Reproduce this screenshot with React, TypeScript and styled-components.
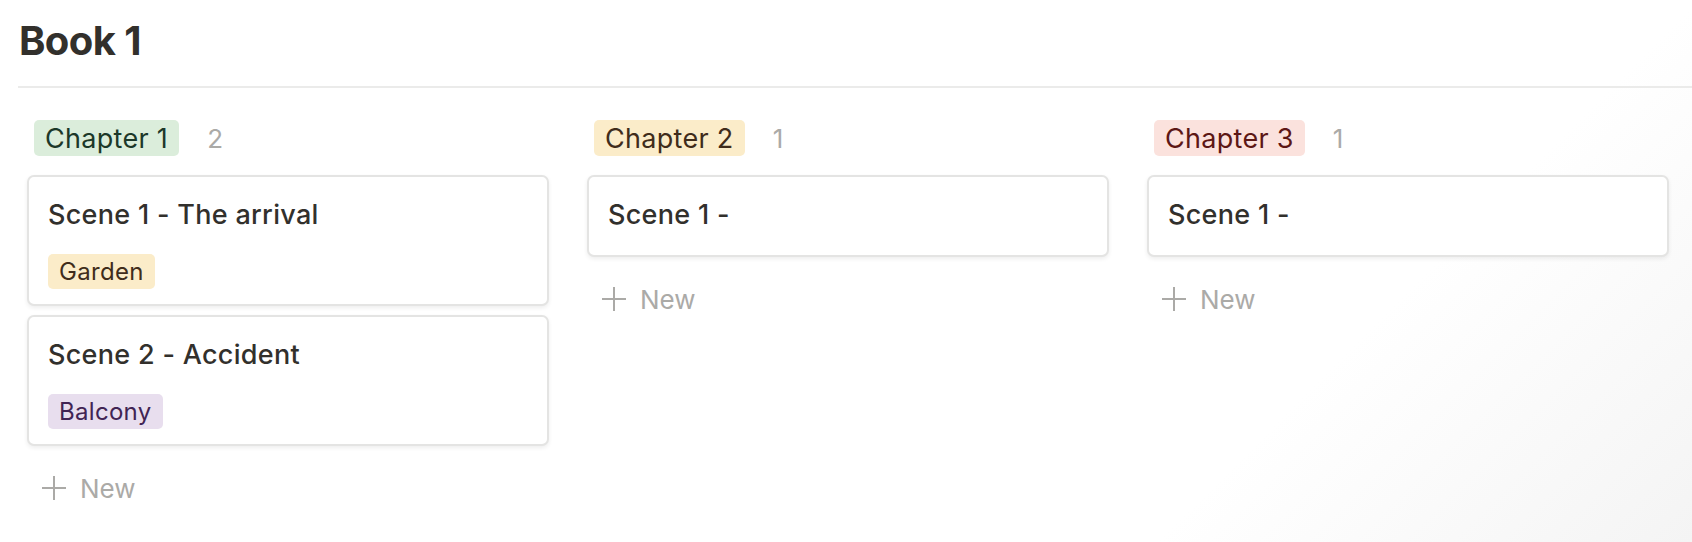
import React from 'react';
import styled, { createGlobalStyle } from 'styled-components';

const GlobalStyle = createGlobalStyle`
  html, body {
    margin: 0;
    padding: 0;
  }
  body {
    width: 1692px;
    height: 542px;
    overflow: hidden;
    font-family: Inter, "Noto Sans", "Liberation Sans", sans-serif;
    color: #37352f;
    background: linear-gradient(135deg, #ffffff 76%, #f4f4f4 100%);
  }
`;

const tagColors = {
  green: { bg: '#dbeddb', fg: '#1c3829' },
  yellow: { bg: '#fbecc9', fg: '#402c1b' },
  red: { bg: '#fbe2dd', fg: '#5d1715' },
  purple: { bg: '#e8deee', fg: '#412454' },
};

type TagColor = keyof typeof tagColors;

const Page = styled.div`
  display: flex;
  flex-direction: column;
  padding-left: 18px;
`;

const Title = styled.h1`
  margin: 0;
  padding: 17px 0 0 1px;
  font-size: 40px;
  line-height: 48px;
  font-weight: 700;
  letter-spacing: -0.6px;
  color: #32302c;
`;

const Divider = styled.div`
  height: 2px;
  margin-top: 21px;
  background: #ebebea;
`;

const Board = styled.div`
  display: flex;
  gap: 38px;
  margin-top: 32px;
  padding-left: 9px;
`;

const Column = styled.div`
  display: flex;
  flex-direction: column;
  width: 522px;
`;

const GroupHeader = styled.div`
  display: flex;
  align-items: center;
  height: 36px;
  padding-left: 7px;
  margin-bottom: 19px;
`;

// chapter pills are a touch taller and larger than property pills
const Pill = styled.span<{ $color: TagColor; $big?: boolean }>`
  display: inline-flex;
  align-items: center;
  height: ${(p) => (p.$big ? 36 : 35)}px;
  padding: 0 11px;
  border-radius: 5px;
  font-size: ${(p) => (p.$big ? 27 : 24)}px;
  letter-spacing: 0.3px;
  white-space: nowrap;
  background: ${(p) => tagColors[p.$color].bg};
  color: ${(p) => tagColors[p.$color].fg};
`;

const Count = styled.span`
  margin-left: 28px;
  font-size: 26px;
  color: #abaaa7;
`;

const Cards = styled.div`
  display: flex;
  flex-direction: column;
  gap: 9px;
`;

const Card = styled.div`
  display: flex;
  flex-direction: column;
  align-items: flex-start;
  padding: 18px 19px 15px;
  background: #fff;
  border: 2px solid #e4e4e3;
  border-radius: 7px;
  box-shadow: 0 2px 4px rgba(15, 15, 15, 0.07);
`;

const CardTitle = styled.div`
  font-size: 27px;
  line-height: 39px;
  font-weight: 500;
  letter-spacing: 0.3px;
  padding-bottom: 6px;
  color: #32302c;
`;

const Props = styled.div`
  display: flex;
  margin-top: 14px;
`;

const NewButton = styled.div`
  display: flex;
  align-items: center;
  gap: 14px;
  height: 36px;
  margin-top: 24px;
  padding-left: 15px;
  font-size: 26px;
  color: #abaaa7;
`;

const PlusIcon = () => (
  <svg width="24" height="24" viewBox="0 0 24 24" fill="none" stroke="#abaaa7" strokeWidth="2">
    <path d="M0 12h24M12 0v24" />
  </svg>
);

interface Scene {
  title: string;
  place?: { name: string; color: TagColor };
}

interface Group {
  name: string;
  color: TagColor;
  scenes: Scene[];
}

const groups: Group[] = [
  {
    name: 'Chapter 1',
    color: 'green',
    scenes: [
      { title: 'Scene 1 - The arrival', place: { name: 'Garden', color: 'yellow' } },
      { title: 'Scene 2 - Accident', place: { name: 'Balcony', color: 'purple' } },
    ],
  },
  { name: 'Chapter 2', color: 'yellow', scenes: [{ title: 'Scene 1 -' }] },
  { name: 'Chapter 3', color: 'red', scenes: [{ title: 'Scene 1 -' }] },
];

export default function App() {
  return (
    <>
      <GlobalStyle />
      <Page>
        <Title>Book 1</Title>
        <Divider />
        <Board>
          {groups.map((g) => (
            <Column key={g.name}>
              <GroupHeader>
                <Pill $color={g.color} $big>
                  {g.name}
                </Pill>
                <Count>{g.scenes.length}</Count>
              </GroupHeader>
              <Cards>
                {g.scenes.map((s) => (
                  <Card key={s.title}>
                    <CardTitle>{s.title}</CardTitle>
                    {s.place && (
                      <Props>
                        <Pill $color={s.place.color}>{s.place.name}</Pill>
                      </Props>
                    )}
                  </Card>
                ))}
              </Cards>
              <NewButton>
                <PlusIcon />
                New
              </NewButton>
            </Column>
          ))}
        </Board>
      </Page>
    </>
  );
}
